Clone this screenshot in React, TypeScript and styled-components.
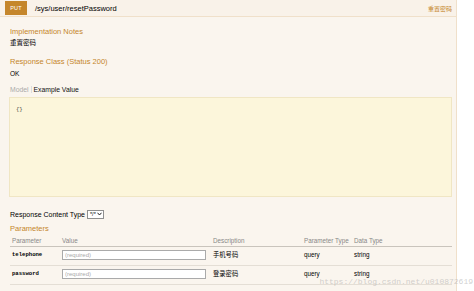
import React from 'react';
import styled, { createGlobalStyle } from 'styled-components';

const GlobalStyle = createGlobalStyle`
  html, body {
    margin: 0;
    padding: 0;
    background: #ffffff;
  }
  body {
    font-family: "Liberation Sans", Arial, "Noto Sans CJK SC", sans-serif;
    color: #000;
  }
`;

const Page = styled.div`
  position: relative;
  width: 474px;
  height: 291px;
  overflow: hidden;
  background: #ffffff;
`;

const Operation = styled.div`
  width: 456px;
  height: 291px;
  background: #faf5ee;
  border-right: 1px solid #f0e0ca;
`;

const Heading = styled.div`
  display: flex;
  align-items: center;
  height: 16px;
  background: #f9f2e9;
  border-bottom: 1px solid #f0e0ca;
`;

const MethodBadge = styled.span`
  display: flex;
  align-items: center;
  justify-content: center;
  width: 22px;
  height: 14px;
  margin-left: 5px;
  background: #c5862b;
  color: #fff;
  font-size: 5.5px;
  letter-spacing: 0.2px;
`;

const PathText = styled.span`
  margin-left: 8px;
  font-size: 7.5px;
  color: #000;
`;

const Summary = styled.span`
  margin-left: auto;
  margin-right: 4px;
  font-size: 6px;
  color: #c5862b;
`;

const Content = styled.div`
  padding: 0 5px 0 9px;
`;

const SectionTitle = styled.h4<{ $top: number }>`
  margin: ${p => p.$top}px 0 0 1px;
  font-size: 7.5px;
  line-height: 10px;
  font-weight: normal;
  color: #c5862b;
`;

const BodyText = styled.div<{ $top: number }>`
  margin: ${p => p.$top}px 0 0 1px;
  font-size: 6.5px;
  line-height: 10px;
`;

const ModelTabs = styled.div`
  display: flex;
  align-items: center;
  margin: 5px 0 0 1px;
  height: 10px;
  font-size: 6.8px;
`;

const Tab = styled.span<{ $active?: boolean }>`
  color: ${p => (p.$active ? '#111' : '#aaa')};
  padding: 0 ${p => (p.$active ? 0 : 2)}px 0 ${p => (p.$active ? 2 : 0)}px;
  border-left: ${p => (p.$active ? '1px solid #ddd' : 'none')};
`;

const CodeBox = styled.pre`
  box-sizing: border-box;
  margin: 3px 0 0 0;
  width: 443px;
  height: 100px;
  padding: 8px 6px;
  background: #fcf6db;
  border: 1px solid #f0e6c4;
  font-family: "Liberation Mono", monospace;
  font-size: 5.5px;
  line-height: 7px;
  color: #444;
`;

const ContentTypeRow = styled.div`
  display: flex;
  align-items: center;
  gap: 2px;
  margin: 12px 0 0 1px;
  height: 10px;
  font-size: 7px;
`;

const SelectBox = styled.span`
  display: flex;
  align-items: center;
  gap: 1px;
  box-sizing: border-box;
  height: 9px;
  padding: 0 1px 0 2px;
  background: #fff;
  border: 1px solid #8f8f8f;
  font-size: 5.5px;
  color: #000;
`;

const ParamGrid = styled.div`
  margin-left: 1px;
  width: 442px;
`;

const GridRow = styled.div<{ $head?: boolean }>`
  display: grid;
  grid-template-columns: 50px 151px 91px 50px 1fr;
  align-items: center;
  padding: ${p => (p.$head ? '3px 0 1px' : '3px 0 5px')};
  border-bottom: 1px solid ${p => (p.$head ? '#c9c4bc' : '#e4ded5')};
  font-size: 6.3px;
  color: ${p => (p.$head ? '#888' : '#000')};
  line-height: 8px;
`;

const Cell = styled.div`
  padding-left: 2px;
`;

const ParamName = styled.code`
  padding-left: 2px;
  font-family: "Liberation Mono", monospace;
  font-weight: bold;
  font-size: 5.6px;
  color: #000;
`;

const ValueInput = styled.input`
  box-sizing: border-box;
  width: 144px;
  height: 10px;
  margin-left: 2px;
  padding: 0 2px;
  background: #fff;
  border: 1px solid #aaa;
  font-family: "Liberation Sans", Arial, sans-serif;
  font-size: 6px;
  outline: none;

  &::placeholder {
    color: #aaa;
  }
`;

const Watermark = styled.div`
  position: absolute;
  right: 1px;
  bottom: 5px;
  font-family: "Liberation Mono", monospace;
  font-size: 8px;
  color: rgba(170, 170, 170, 0.55);
  pointer-events: none;
`;

const Chevron = () => (
  <svg width="5" height="4" viewBox="0 0 10 8">
    <path d="M1 1.5 L5 6 L9 1.5" fill="none" stroke="#222" strokeWidth="2" />
  </svg>
);

const params = [
  { name: 'telephone', desc: '手机号码', type: 'query', dataType: 'string' },
  { name: 'password', desc: '登录密码', type: 'query', dataType: 'string' },
];

export default function App() {
  return (
    <Page>
      <GlobalStyle />
      <Operation>
        <Heading>
          <MethodBadge>PUT</MethodBadge>
          <PathText>/sys/user/resetPassword</PathText>
          <Summary>重置密码</Summary>
        </Heading>
        <Content>
          <SectionTitle $top={10}>Implementation Notes</SectionTitle>
          <BodyText $top={1}>重置密码</BodyText>
          <SectionTitle $top={9}>Response Class (Status 200)</SectionTitle>
          <BodyText $top={2}>OK</BodyText>
          <ModelTabs>
            <Tab>Model</Tab>
            <Tab $active>Example Value</Tab>
          </ModelTabs>
          <CodeBox>{'{}'}</CodeBox>
          <ContentTypeRow>
            Response Content Type
            <SelectBox>
              */*
              <Chevron />
            </SelectBox>
          </ContentTypeRow>
          <SectionTitle $top={5}>Parameters</SectionTitle>
          <ParamGrid>
            <GridRow $head>
              <Cell>Parameter</Cell>
              <Cell>Value</Cell>
              <Cell>Description</Cell>
              <Cell>Parameter Type</Cell>
              <Cell>Data Type</Cell>
            </GridRow>
            {params.map(p => (
              <GridRow key={p.name}>
                <ParamName>{p.name}</ParamName>
                <div>
                  <ValueInput placeholder="(required)" />
                </div>
                <Cell>{p.desc}</Cell>
                <Cell>{p.type}</Cell>
                <Cell>{p.dataType}</Cell>
              </GridRow>
            ))}
          </ParamGrid>
        </Content>
      </Operation>
      <Watermark>https://blog.csdn.net/u010872619</Watermark>
    </Page>
  );
}
